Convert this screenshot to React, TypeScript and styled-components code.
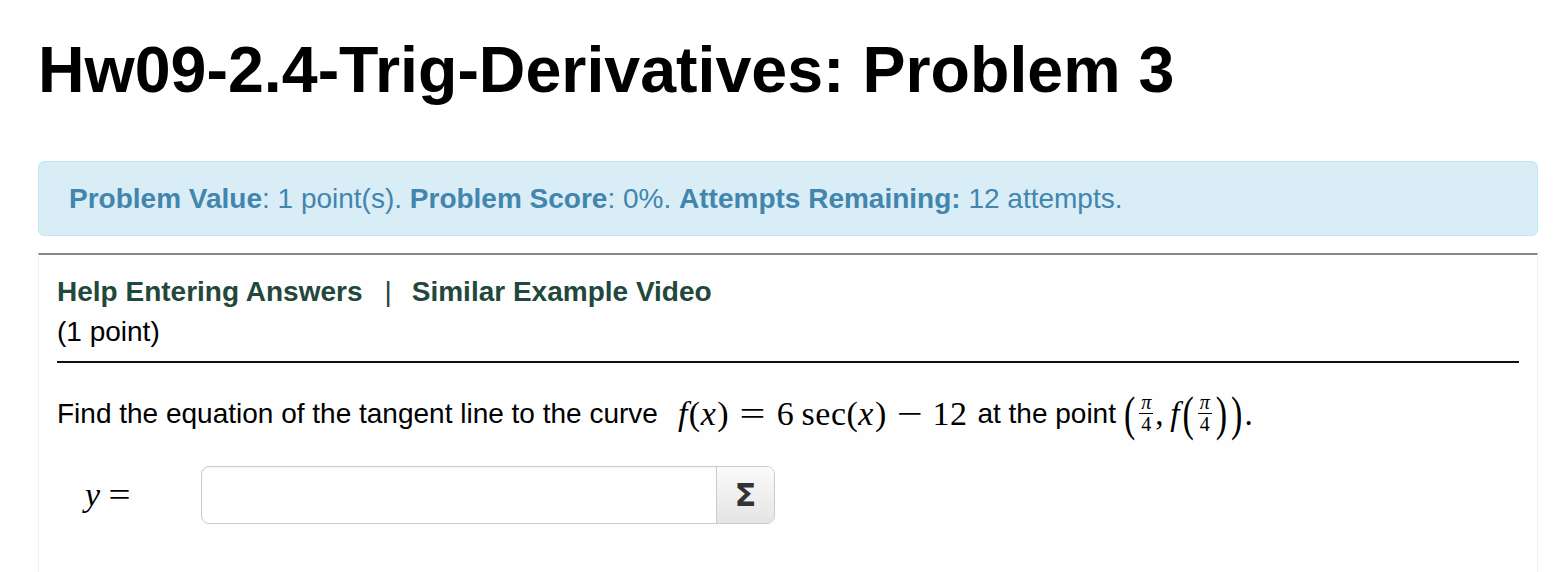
import styled, { createGlobalStyle } from 'styled-components';

const GlobalStyle = createGlobalStyle`
  html, body {
    margin: 0;
    padding: 0;
    background: #ffffff;
  }
  body {
    font-family: "Liberation Sans", Arial, Helvetica, sans-serif;
    color: #000;
  }
`;

const Page = styled.div`
  width: 1500px;
  padding-left: 38px;
  min-height: 572px;
  display: flex;
  flex-direction: column;
`;

const Title = styled.h1`
  margin: 35px 0 56px;
  font-size: 64.5px;
  line-height: 70px;
  font-weight: 700;
`;

const Alert = styled.div`
  background: #d9edf7;
  border: 1px solid #bce8f1;
  border-radius: 6px;
  padding: 16px 30px;
  font-size: 28px;
  line-height: 41px;
  color: #4285ad;

  b {
    font-weight: 700;
  }
`;

const Problem = styled.div`
  margin-top: 17px;
  border-top: 2px solid #888888;
  border-left: 1px solid #f2f2f2;
  border-right: 1px solid #f2f2f2;
  background: #fefefe;
  padding: 17px 18px 0;
  flex: 1;
  font-size: 28px;
  line-height: 40px;
`;

const LinkRow = styled.div`
  display: flex;
  align-items: center;
  font-weight: 700;
  color: #22483c;
`;

const Divider = styled.span`
  font-weight: 400;
  margin: 0 20px 0 22px;
  color: #22483c;
`;

const Rule = styled.hr`
  margin: 9px 0 0;
  border: 0;
  height: 2px;
  background: #111;
`;

const Statement = styled.p`
  margin: 30px 0 0;
  display: flex;
  align-items: center;
  white-space: nowrap;
`;

const Math = styled.span`
  font-family: "Liberation Serif", "Times New Roman", serif;
  font-size: 34px;
  letter-spacing: 0.5px;
  display: inline-flex;
  align-items: center;
  margin: 0 10px 0 20px;
`;

const Var = styled.i`
  font-style: italic;
  padding-right: 1px;
`;

const Op = styled.span<{ $gap?: number }>`
  margin: 0 ${(p) => p.$gap ?? 10}px;
  transform: scaleX(1.35);
`;

const BigParen = styled.span`
  font-family: "Liberation Serif", serif;
  font-size: 34px;
  display: inline-block;
  transform: scaleY(1.45);
  margin: 0 2px;
`;

const Frac = styled.span`
  display: inline-flex;
  flex-direction: column;
  align-items: center;
  font-family: "Liberation Serif", serif;
  font-size: 20px;
  line-height: 19px;
  margin: 0 2px;

  span:first-child {
    font-style: italic;
    border-bottom: 1.5px solid #000;
    padding: 0 2px 1px;
  }
  span:last-child {
    padding-top: 1px;
  }
`;

const PointMath = styled.span`
  display: inline-flex;
  align-items: center;
  margin-left: 6px;
  font-family: "Liberation Serif", serif;
  font-size: 33px;
`;

const AnswerRow = styled.div`
  display: flex;
  align-items: center;
  margin-top: 32px;
  padding-left: 28px;
`;

const AnswerLabel = styled.span`
  font-family: "Liberation Serif", serif;
  font-size: 34px;
  width: 116px;

  span {
    display: inline-block;
    margin-left: 9px;
    transform: scaleX(1.15);
  }
`;

const InputGroup = styled.div`
  display: flex;
  width: 572px;
  height: 56px;
  border: 1px solid #cccccc;
  border-radius: 8px;
  overflow: hidden;
  background: #fff;
  box-shadow: inset 0 1px 2px rgba(0, 0, 0, 0.06);
`;

const AnswerInput = styled.input`
  flex: 1;
  border: 0;
  outline: none;
  background: transparent;
  font-size: 26px;
  padding: 0 12px;
`;

const SigmaButton = styled.button`
  width: 58px;
  border: 0;
  border-left: 1px solid #cccccc;
  background: linear-gradient(#fbfbfb, #e4e4e4);
  font-family: "DejaVu Sans", sans-serif;
  font-weight: 700;
  font-size: 32px;
  color: #333;
  padding: 0;
  display: flex;
  align-items: center;
  justify-content: center;
`;

export default function App() {
  return (
    <>
      <GlobalStyle />
      <Page>
        <Title>Hw09-2.4-Trig-Derivatives: Problem 3</Title>
        <Alert>
          <b>Problem Value</b>: 1 point(s). <b>Problem Score</b>: 0%.{' '}
          <b>Attempts Remaining:</b> 12 attempts.
        </Alert>
        <Problem>
          <LinkRow>
            Help Entering Answers
            <Divider>|</Divider>
            Similar Example Video
          </LinkRow>
          <div>(1 point)</div>
          <Rule />
          <Statement>
            Find the equation of the tangent line to the curve
            <Math>
              <Var>f</Var>(<Var>x</Var>)<Op $gap={14}>=</Op>6&thinsp;sec(<Var>x</Var>)
              <Op $gap={13}>−</Op>12
            </Math>
            at the point
            <PointMath>
              <BigParen>(</BigParen>
              <Frac>
                <span>π</span>
                <span>4</span>
              </Frac>
              ,&thinsp;<Var>f</Var>
              <BigParen>(</BigParen>
              <Frac>
                <span>π</span>
                <span>4</span>
              </Frac>
              <BigParen>)</BigParen>
              <BigParen>)</BigParen>.
            </PointMath>
          </Statement>
          <AnswerRow>
            <AnswerLabel>
              <Var>y</Var>
              <span>=</span>
            </AnswerLabel>
            <InputGroup>
              <AnswerInput type="text" aria-label="answer" />
              <SigmaButton type="button">Σ</SigmaButton>
            </InputGroup>
          </AnswerRow>
        </Problem>
      </Page>
    </>
  );
}
